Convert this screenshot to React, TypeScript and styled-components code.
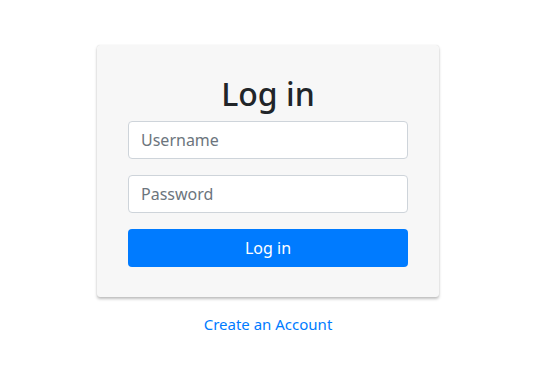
import React from 'react'
import styled, {createGlobalStyle} from 'styled-components'

const GlobalStyle = createGlobalStyle`
    body {
        margin: 0;
        background: #fff;
        font-family: "Segoe UI", "Noto Sans", "Open Sans", sans-serif;
        color: #212529;
    }
`

const Page = styled.div`
    padding: 45px 0 0 97px;
    width: 342px;
    display: flex;
    flex-direction: column;
    align-items: center;
`

const Card = styled.form`
    box-sizing: border-box;
    width: 342px;
    padding: 30px 31px;
    background-color: #f7f7f7;
    border-radius: 3px;
    box-shadow: 0 2px 3px rgba(0, 0, 0, 0.25), 0 0 1px rgba(0, 0, 0, 0.15);
    display: flex;
    flex-direction: column;
`

const Title = styled.h2`
    margin: 0 0 8px;
    font-size: 32px;
    font-weight: 500;
    line-height: 1.2;
    text-align: center;
`

const Input = styled.input`
    box-sizing: border-box;
    height: 38px;
    margin-bottom: 16px;
    padding: 6px 12px;
    font-family: inherit;
    font-size: 16px;
    color: #495057;
    background: #fff;
    border: 1px solid #ced4da;
    border-radius: 4px;
    outline: none;

    &::placeholder {
        color: #6c757d;
    }
`

const SubmitButton = styled.button`
    height: 38px;
    font-family: inherit;
    font-size: 16px;
    color: #fff;
    background-color: #007bff;
    border: none;
    border-radius: 4px;
    cursor: pointer;
`

const AccountLink = styled.a`
    margin-top: 17px;
    font-size: 15px;
    color: #007bff;
    text-decoration: none;
`

const App = () => {
    return (
        <Page>
            <GlobalStyle/>
            <Card onSubmit={e => e.preventDefault()}>
                <Title>Log in</Title>
                <Input type="text" placeholder="Username"/>
                <Input type="password" placeholder="Password"/>
                <SubmitButton type="submit">Log in</SubmitButton>
            </Card>
            <AccountLink href="#">Create an Account</AccountLink>
        </Page>
    )
}

export default App
